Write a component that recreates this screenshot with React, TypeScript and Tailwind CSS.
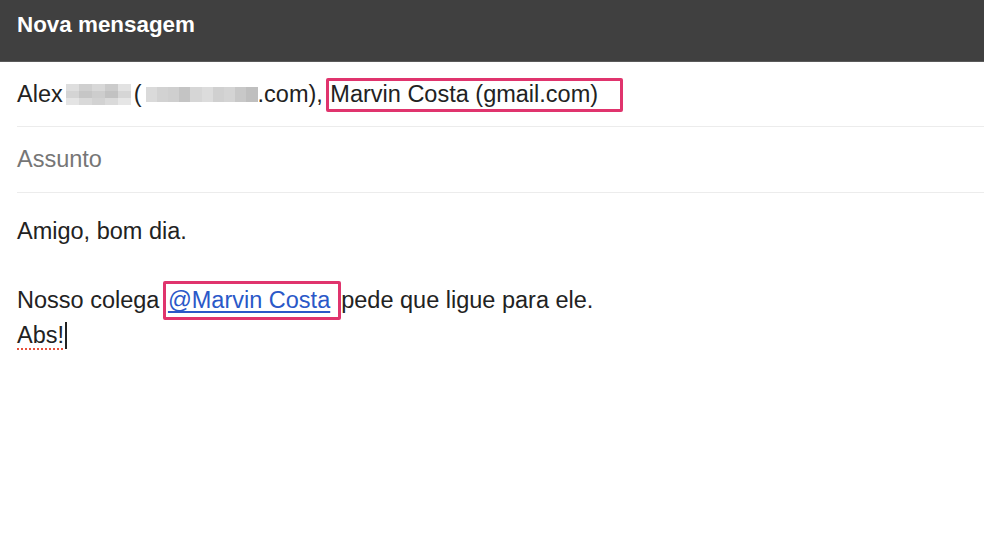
const blur1 = [
  ["#dedede", "#cfcfcf", "#d8d8d8", "#cbcbcb", "#e2e2e2"],
  ["#d4d4d4", "#c6c6c6", "#cdcdcd", "#c2c2c2", "#d6d6d6"],
  ["#e4e4e4", "#d9d9d9", "#d2d2d2", "#dadada", "#e6e6e6"],
];

const blur2 = ["#dadada", "#d2d2d2", "#cfcfcf", "#c4c4c4", "#d6d6d6", "#dcdcdc", "#d0d0d0", "#d4d4d4", "#c8c8c8", "#bfbfbf"];

function Pixelated() {
  return (
    <span className="mx-[3px] inline-flex h-[22px] w-[65px] flex-col">
      {blur1.map((row, i) => (
        <span key={i} className="flex flex-1">
          {row.map((c, j) => (
            <span key={j} className="flex-1" style={{ background: c }} />
          ))}
        </span>
      ))}
    </span>
  );
}

export default function App() {
  return (
    <div
      className="h-[549px] w-[984px] overflow-hidden bg-white text-[#222]"
      style={{ fontFamily: '"Liberation Sans", Arial, sans-serif' }}
    >
      <div className="flex h-[62px] items-center border-b border-[#5a5a5a] bg-[#404040] px-[17px] pb-[12px]">
        <span className="text-[22.4px] font-bold text-white">Nova mensagem</span>
      </div>

      <div className="ml-[17px] flex h-[65px] items-center border-b border-[#ececec] pt-[1px] text-[23.5px]">
        <span>Alex</span>
        <Pixelated />
        <span>(</span>
        <span className="ml-[4px] inline-flex h-[15px] w-[112px]">
          {blur2.map((c, i) => (
            <span key={i} className="flex-1" style={{ background: c }} />
          ))}
        </span>
        <span>.com),&nbsp;</span>
        <span className="-ml-[3px] flex h-[34px] items-center rounded-[2px] border-[3px] border-[#e0346d] pl-[1px] pr-[22px]">
          Marvin Costa (gmail.com)
        </span>
      </div>

      <div className="ml-[17px] flex h-[66px] items-center border-b border-[#ececec] text-[23.5px] text-[#767676]">
        Assunto
      </div>

      <div className="px-[17px] pt-[21px] text-[23.5px] leading-[35px]">
        <div>Amigo, bom dia.</div>
        <div className="h-[34px]" />
        <div className="flex h-[35px] items-center">
          <span>Nosso colega&nbsp;</span>
          <span className="-ml-[3px] flex h-[39px] shrink-0 items-center rounded-[2px] border-[3px] border-[#e0346d] pl-[2px] pr-[8px]">
            <span className="text-[#2a58c8] underline decoration-[1.5px] underline-offset-[3px]">@Marvin Costa</span>
          </span>
          <span>pede que ligue para ele.</span>
        </div>
        <div className="flex h-[35px] items-center">
          <span className="underline decoration-[#e8503a] decoration-dotted decoration-2 underline-offset-[5px]">Abs!</span>
          <span className="ml-[1px] inline-block h-[27px] w-[2px] bg-[#222]" />
        </div>
      </div>
    </div>
  );
}
